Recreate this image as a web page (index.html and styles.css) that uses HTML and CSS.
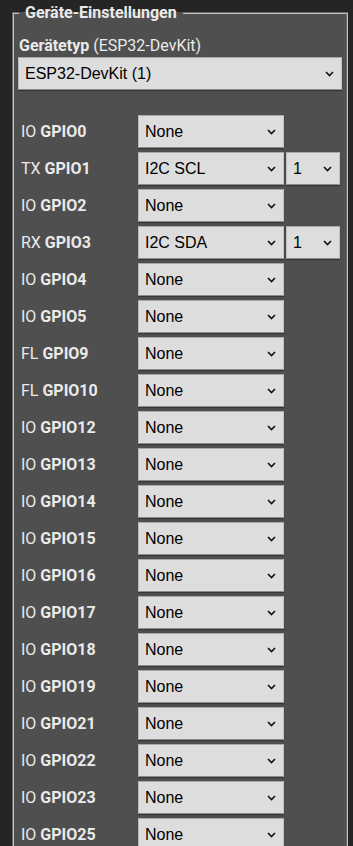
FILE: index.html
```html
<!DOCTYPE html>
<html>
<head>
	<meta charset="UTF-8">
	<meta name="viewport" content="width=device-width, initial-scale=1.0">
	<title>Geräte-Einstellungen</title>
	<link rel="stylesheet" href="styles.css">
</head>
<body>
	<div class="page">
		<fieldset class="settings">
			<legend><b>&nbsp;Geräte-Einstellungen&nbsp;</b></legend>
			<form method="get" action="md">
				<div class="module-label"><b>Gerätetyp</b> (ESP32-DevKit)</div>
				<select class="module-select" id="g99" name="g99">
					<option>ESP32-DevKit (1)</option>
				</select>

				<div class="gpio-list">
					<div class="gpio-row"><span class="gpio-label">IO <b>GPIO0</b></span><select class="gpio-select"><option>None</option></select></div>
					<div class="gpio-row"><span class="gpio-label">TX <b>GPIO1</b></span><select class="gpio-select"><option>I2C SCL</option></select><select class="gpio-select index"><option>1</option></select></div>
					<div class="gpio-row"><span class="gpio-label">IO <b>GPIO2</b></span><select class="gpio-select"><option>None</option></select></div>
					<div class="gpio-row"><span class="gpio-label">RX <b>GPIO3</b></span><select class="gpio-select"><option>I2C SDA</option></select><select class="gpio-select index"><option>1</option></select></div>
					<div class="gpio-row"><span class="gpio-label">IO <b>GPIO4</b></span><select class="gpio-select"><option>None</option></select></div>
					<div class="gpio-row"><span class="gpio-label">IO <b>GPIO5</b></span><select class="gpio-select"><option>None</option></select></div>
					<div class="gpio-row"><span class="gpio-label">FL <b>GPIO9</b></span><select class="gpio-select"><option>None</option></select></div>
					<div class="gpio-row"><span class="gpio-label">FL <b>GPIO10</b></span><select class="gpio-select"><option>None</option></select></div>
					<div class="gpio-row"><span class="gpio-label">IO <b>GPIO12</b></span><select class="gpio-select"><option>None</option></select></div>
					<div class="gpio-row"><span class="gpio-label">IO <b>GPIO13</b></span><select class="gpio-select"><option>None</option></select></div>
					<div class="gpio-row"><span class="gpio-label">IO <b>GPIO14</b></span><select class="gpio-select"><option>None</option></select></div>
					<div class="gpio-row"><span class="gpio-label">IO <b>GPIO15</b></span><select class="gpio-select"><option>None</option></select></div>
					<div class="gpio-row"><span class="gpio-label">IO <b>GPIO16</b></span><select class="gpio-select"><option>None</option></select></div>
					<div class="gpio-row"><span class="gpio-label">IO <b>GPIO17</b></span><select class="gpio-select"><option>None</option></select></div>
					<div class="gpio-row"><span class="gpio-label">IO <b>GPIO18</b></span><select class="gpio-select"><option>None</option></select></div>
					<div class="gpio-row"><span class="gpio-label">IO <b>GPIO19</b></span><select class="gpio-select"><option>None</option></select></div>
					<div class="gpio-row"><span class="gpio-label">IO <b>GPIO21</b></span><select class="gpio-select"><option>None</option></select></div>
					<div class="gpio-row"><span class="gpio-label">IO <b>GPIO22</b></span><select class="gpio-select"><option>None</option></select></div>
					<div class="gpio-row"><span class="gpio-label">IO <b>GPIO23</b></span><select class="gpio-select"><option>None</option></select></div>
					<div class="gpio-row"><span class="gpio-label">IO <b>GPIO25</b></span><select class="gpio-select"><option>None</option></select></div>
				</div>
			</form>
		</fieldset>
	</div>
</body>
</html>
```

FILE: styles.css
```css
body {
	margin: 0;
	background-color: #252525;
	color: #eaeaea;
	font-family: Roboto, 'Noto Sans', sans-serif;
	font-size: 16px;
}

.page {
	padding: 3px 5px 20px 12px;
}

.settings {
	margin: 0;
	width: 336px;
	box-sizing: border-box;
	background-color: #4f4f4f;
	border: 2px groove #c0c0c0;
	padding: 0 5px 5px;
	min-inline-size: 0;
}

.settings legend {
	padding: 0 2px;
	line-height: 19px;
	font-size: 16px;
}

.module-label {
	margin-top: 14px;
	line-height: 19px;
}

select {
	appearance: none;
	-webkit-appearance: none;
	box-sizing: border-box;
	height: 33px;
	margin: 0;
	padding: 0 20px 0 6px;
	font-family: 'Liberation Sans', Arial, sans-serif;
	font-size: 16px;
	color: #000;
	background-color: #dddddd;
	background-image: url("data:image/svg+xml,%3Csvg xmlns='http://www.w3.org/2000/svg' width='9' height='6' viewBox='0 0 9 6'%3E%3Cpolyline points='1,1 4.5,4.5 8,1' fill='none' stroke='%23111' stroke-width='1.6'/%3E%3C/svg%3E");
	background-repeat: no-repeat;
	background-position: right 7px center;
	border: 1px solid;
	border-color: #a8a8a8 #c4c4c4 #8c8c8c #bcbcbc;
	border-radius: 0;
	box-shadow: 0 1px 1px rgba(0, 0, 0, 0.3);
}

.module-select {
	display: block;
	width: calc(100% + 2px);
	margin: 2px -1px 0;
}

.gpio-list {
	display: flex;
	flex-direction: column;
	gap: 4px;
	margin-top: 25px;
	padding-left: 2px;
}

.gpio-row {
	display: grid;
	grid-template-columns: 115px 146px 54px;
	column-gap: 2px;
	align-items: center;
}

.gpio-label {
	white-space: nowrap;
}

.gpio-select {
	width: 100%;
}
```
